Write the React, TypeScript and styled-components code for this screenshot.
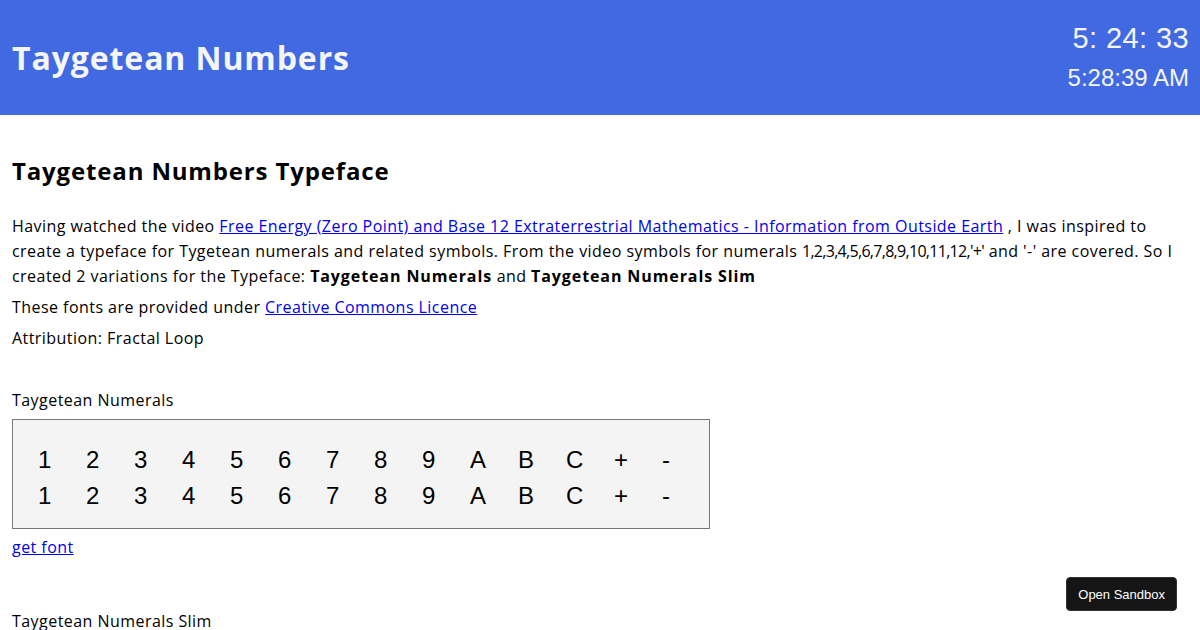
import React from "react";
import styled, { createGlobalStyle } from "styled-components";

const Global = createGlobalStyle`
  html, body { margin: 0; padding: 0; background: #fff; }
  body { font-family: "Open Sans", "Noto Sans", sans-serif; color: #000; }
`;

const Header = styled.header`
  height: 115px;
  background: #4169e1;
  display: flex;
  align-items: center;
  justify-content: space-between;
  padding: 0 11px 0 12px;
  box-sizing: border-box;
`;

const Title = styled.h1`
  margin: 0;
  font-family: "Open Sans", sans-serif;
  font-weight: 700;
  font-size: 32px;
  color: #f5f5f5;
  letter-spacing: 0.9px;
`;

const Clock = styled.div`
  display: flex;
  flex-direction: column;
  align-items: flex-end;
  color: #f5f5f5;
  font-family: "Liberation Sans", sans-serif;
  padding-bottom: 2px;
`;

const Big = styled.div`
  font-size: 29px;
  line-height: 36px;
  margin-bottom: 7px;
  letter-spacing: 0.4px;
`;

const Small = styled.div`
  font-size: 24px;
  line-height: 30px;
`;

const Main = styled.main`
  padding: 0 12px;
  letter-spacing: 0.45px;
`;

const H2 = styled.h2`
  margin: 38px 0 25px;
  font-size: 24px;
  font-weight: 700;
  line-height: 36px;
  letter-spacing: 0.85px;
`;

const P = styled.p`
  margin: 0 0 6px;
  font-size: 16px;
  line-height: 25px;
`;

const Strong = styled.b`
  font-weight: 700;
  letter-spacing: 0.9px;
`;

const Digits = styled.span`
  letter-spacing: -0.7px;
`;

const A = styled.a`
  color: #0000ee;
  text-decoration: underline;
`;

const Label = styled.div<{ $top: number }>`
  margin-top: ${(p) => p.$top}px;
  font-size: 16px;
  line-height: 25px;
`;

const Box = styled.div`
  width: 698px;
  box-sizing: border-box;
  border: 1px solid #777;
  background: #f4f4f4;
  padding: 22px 0 14px 25px;
  margin-top: 6px;
  letter-spacing: 0;
`;

const Row = styled.div`
  display: flex;
  font-family: "Liberation Sans", sans-serif;
  font-size: 24px;
  line-height: 36px;
`;

const Cell = styled.span`
  width: 48px;
  flex: none;
`;

const GetFont = styled.div`
  margin-top: 6px;
  font-size: 16px;
  line-height: 25px;
`;

const Sandbox = styled.button`
  position: fixed;
  right: 23px;
  bottom: 19px;
  height: 34px;
  padding: 0 11px;
  border: 1px solid #333;
  border-radius: 4px;
  background: #151515;
  color: #fff;
  font-family: "Liberation Sans", sans-serif;
  font-size: 13px;
`;

const chars = ["1", "2", "3", "4", "5", "6", "7", "8", "9", "A", "B", "C", "+", "-"];

export default function App() {
  return (
    <>
      <Global />
      <Header>
        <Title>Taygetean Numbers</Title>
        <Clock>
          <Big>5: 24: 33</Big>
          <Small>5:28:39 AM</Small>
        </Clock>
      </Header>
      <Main>
        <H2>Taygetean Numbers Typeface</H2>
        <P>
          Having watched the video{" "}
          <A href="#">Free Energy (Zero Point) and Base 12 Extraterrestrial Mathematics - Information from Outside Earth</A>{" "}
          , I was inspired to create a typeface for Tygetean numerals and related symbols. From the video symbols for
          numerals <Digits>1,2,3,4,5,6,7,8,9,10,11,12,'+'</Digits> and '-' are covered. So I created 2 variations for the
          Typeface: <Strong>Taygetean Numerals</Strong> and <Strong>Taygetean Numerals Slim</Strong>
        </P>
        <P>
          These fonts are provided under <A href="#">Creative Commons Licence</A>
        </P>
        <P>Attribution: Fractal Loop</P>
        <Label $top={37}>Taygetean Numerals</Label>
        <Box>
          <Row>
            {chars.map((c, i) => (
              <Cell key={i}>{c}</Cell>
            ))}
          </Row>
          <Row>
            {chars.map((c, i) => (
              <Cell key={i}>{c}</Cell>
            ))}
          </Row>
        </Box>
        <GetFont>
          <A href="#">get font</A>
        </GetFont>
        <Label $top={49}>Taygetean Numerals Slim</Label>
      </Main>
      <Sandbox>Open Sandbox</Sandbox>
    </>
  );
}
